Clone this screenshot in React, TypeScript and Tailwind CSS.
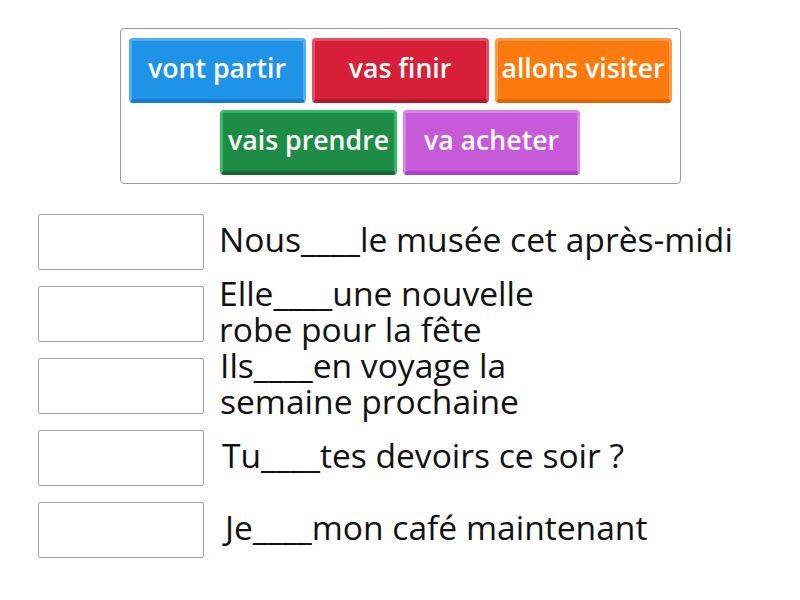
const TILES = [
  { label: 'vont partir', cls: 'bg-[#1f93e8] border-t-[#52aef0] border-x-[#52aef0] border-b-[#157ccd]' },
  { label: 'vas finir', cls: 'bg-[#d71f38] border-t-[#e24e62] border-x-[#e24e62] border-b-[#b3182d]' },
  { label: 'allons visiter', cls: 'bg-[#fd7b0e] border-t-[#ff9a46] border-x-[#ff9a46] border-b-[#e36502]' },
  { label: 'vais prendre', cls: 'bg-[#1f8c45] border-t-[#33bb64] border-x-[#33bb64] border-b-[#176a34]' },
  { label: 'va acheter', cls: 'bg-[#c65ad8] border-t-[#d883e4] border-x-[#d883e4] border-b-[#b13fc7]' },
]

// pad nudges the sentence a few px to match the reference
const ROWS = [
  { lines: ['Nous____le musée cet après-midi'], pad: 'ml-0' },
  { lines: ['Elle____une nouvelle', 'robe pour la fête'], pad: 'ml-0' },
  { lines: ['Ils____en voyage la', 'semaine prochaine'], pad: 'ml-[1px]' },
  { lines: ['Tu____tes devoirs ce soir ?'], pad: 'ml-[3px]' },
  { lines: ['Je____mon café maintenant'], pad: 'ml-[6px]' },
]

export default function App() {
  return (
    <div className="w-[800px] h-[600px] bg-white font-['Open_Sans',sans-serif]">
      <div className="pt-[28px] flex justify-center">
        <div className="w-[561px] h-[156px] border border-[#999] rounded-[4px] pt-[9px] px-[8px] flex flex-wrap justify-center content-start gap-x-[6px] gap-y-[7px]">
          {TILES.map(t => (
            <div
              key={t.label}
              className={`w-[177px] h-[65px] rounded-[4px] border-x-[3px] border-t-[3px] border-b-[4px] flex items-center justify-center text-white text-[26.7px] font-semibold leading-none pb-[4px] whitespace-nowrap ${t.cls}`}
            >
              {t.label}
            </div>
          ))}
        </div>
      </div>

      <div className="pt-[30px] pl-[38px] flex flex-col gap-[17px]">
        {ROWS.map((row, i) => (
          <div key={i} className="flex items-center gap-[15px] h-[55px]">
            <div className="w-[166px] h-[56px] border border-[#a0a0a0] rounded-[2px] bg-white shrink-0" />
            <div className={`text-[33.6px] leading-[36px] text-[#111] whitespace-nowrap pb-[6px] ${row.pad}`}>
              {row.lines.map(l => (
                <div key={l}>{l}</div>
              ))}
            </div>
          </div>
        ))}
      </div>
    </div>
  )
}
